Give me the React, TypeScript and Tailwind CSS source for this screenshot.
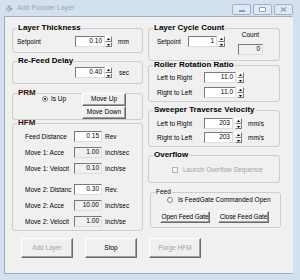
import React from 'react'

// Classic WinForms dialog, drawn small

function Spinner({ className = '' }: { className?: string }) {
    return (
        <div className={`flex h-[11px] w-[7px] shrink-0 flex-col ${className}`}>
            <div className="flex h-[6px] items-center justify-center border border-t-white border-l-white border-r-[#7a7a7a] border-b-[#7a7a7a] bg-[#f0f0f0]">
                <svg width="3" height="2" viewBox="0 0 3 2">
                    <path d="M1.5 0L3 2H0z" fill="#000" />
                </svg>
            </div>
            <div className="flex h-[5px] items-center justify-center border border-t-white border-l-white border-r-[#7a7a7a] border-b-[#7a7a7a] bg-[#f0f0f0]">
                <svg width="3" height="2" viewBox="0 0 3 2">
                    <path d="M0 0h3L1.5 2z" fill="#000" />
                </svg>
            </div>
        </div>
    )
}

function Field({ value, className = '', gray = false }: { value: string; className?: string; gray?: boolean }) {
    return (
        <div
            className={`flex h-[11px] shrink-0 items-center justify-end border border-t-[#7a7a7a] border-l-[#7a7a7a] border-r-[#dedede] border-b-[#dedede] pr-[2px] leading-none ${gray ? 'bg-[#f0f0f0]' : 'bg-white'} ${className}`}
        >
            {value}
        </div>
    )
}

function Btn({ children, className = '', disabled = false }: { children: React.ReactNode; className?: string; disabled?: boolean }) {
    return (
        <button
            type="button"
            className={`flex shrink-0 items-center justify-center whitespace-nowrap border border-t-white border-l-white border-r-[#696969] border-b-[#696969] bg-[#f0f0f0] leading-none shadow-[inset_-1px_-1px_0_#a0a0a0] ${disabled ? 'text-[#a3a3a3]' : 'text-black'} ${className}`}
        >
            {children}
        </button>
    )
}

function Radio({ checked = false }: { checked?: boolean }) {
    return (
        <span className="flex h-[6px] w-[6px] shrink-0 items-center justify-center rounded-full border border-[#7f7f7f] bg-white">
            {checked && <span className="h-[2px] w-[2px] rounded-full bg-black" />}
        </span>
    )
}

function Group({
    title,
    bold = true,
    titleColor = 'text-black',
    className = '',
    children,
}: {
    title: string
    bold?: boolean
    titleColor?: string
    className?: string
    children: React.ReactNode
}) {
    return (
        <fieldset className={`min-w-0 rounded-[3px] border border-[#cdcdcd] ${className}`}>
            <legend
                className={`ml-[4px] px-[1px] leading-[8px] ${bold ? `text-[8px] font-bold ${titleColor}` : 'text-[6.5px] text-black'}`}
            >
                {title}
            </legend>
            {children}
        </fieldset>
    )
}

function HfmRow({ label, value, unit, gray = false, className = '' }: { label: string; value: string; unit: string; gray?: boolean; className?: string }) {
    return (
        <div className={`flex h-[11px] items-center pl-[12px] ${className}`}>
            <span className="w-[49px] shrink-0 whitespace-nowrap">{label}</span>
            <Field value={value} gray={gray} className="w-[28px]" />
            <span className="ml-[3px] whitespace-nowrap">{unit}</span>
        </div>
    )
}

function SpinRow({ label, value, fieldW, unit, className = '' }: { label: string; value: string; fieldW: string; unit?: string; className?: string }) {
    return (
        <div className={`flex h-[11px] items-center pl-[8px] ${className}`}>
            <span className="w-[47px] shrink-0 whitespace-nowrap">{label}</span>
            <Field value={value} className={fieldW} />
            <Spinner className={unit ? 'ml-[2px]' : 'ml-[1px]'} />
            {unit && <span className="ml-[6px]">{unit}</span>}
        </div>
    )
}

export default function App() {
    return (
        <div className="flex h-[280px] w-[300px] flex-col bg-[#d3e0f0] pb-[6px] pl-[4px] pr-[7px] font-['Liberation_Sans',Arial,sans-serif] text-[6.5px] text-black">
            {/* title bar */}
            <div className="flex h-[16px] shrink-0 items-center">
                <svg width="8" height="8" viewBox="0 0 8 8" className="ml-[1px]">
                    <circle cx="4" cy="2.5" r="1.6" fill="#a7afb8" />
                    <circle cx="2.2" cy="5" r="1.6" fill="#b3bac2" />
                    <circle cx="5.8" cy="5" r="1.6" fill="#9ea7b1" />
                    <rect x="3.4" y="5.5" width="1.2" height="2.5" fill="#a7afb8" />
                </svg>
                <span className="ml-[4px] text-[7px] text-[#9ca6b1]">Add Powder Layer</span>
                <div className="ml-auto flex gap-[2px] self-end pb-[1px]">
                    <div className="flex h-[11px] w-[19px] items-center justify-center rounded-[2px] border border-[#9fb2c9] bg-[#dfe8f4]">
                        <span className="mt-[3px] h-[2px] w-[6px] border border-[#8d9db1] bg-white" />
                    </div>
                    <div className="flex h-[11px] w-[19px] items-center justify-center rounded-[2px] border border-[#9fb2c9] bg-[#dfe8f4]">
                        <span className="h-[5px] w-[7px] rounded-[1px] border border-[#8d9db1] bg-white" />
                    </div>
                    <div className="flex h-[11px] w-[19px] items-center justify-center rounded-[2px] border border-[#9fb2c9] bg-[#dfe8f4]">
                        <svg width="7" height="5" viewBox="0 0 7 5">
                            <path d="M1 0.5L6 4.5M6 0.5L1 4.5" stroke="#8d9db1" strokeWidth="1.2" />
                        </svg>
                    </div>
                </div>
            </div>

            {/* client area */}
            <div className="flex flex-1 flex-col border border-[#9cadc2] border-r-[#eaf1f9] bg-[#f0f0f0] pl-[7px] pt-[7px]">
                <div className="flex h-[207px] items-start gap-[5px]">
                    {/* left column */}
                    <div className="flex w-[131px] flex-col">
                        <Group title="Layer Thickness" className="h-[29px]">
                            <div className="mt-[4px] flex h-[11px] items-center pl-[4px]">
                                <span className="w-[58px] shrink-0">Setpoint</span>
                                <Field value="0.10" className="w-[30px]" />
                                <Spinner />
                                <span className="ml-[6px]">mm</span>
                            </div>
                        </Group>

                        <Group title="Re-Feed Delay" className="mt-[4px] h-[27px]">
                            <div className="mt-[2px] flex h-[11px] items-center pl-[62px]">
                                <Field value="0.40" className="w-[30px]" />
                                <Spinner />
                                <span className="ml-[7px]">sec</span>
                            </div>
                        </Group>

                        <Group title="PRM" titleColor="text-[#3a0a0a]" className="mt-[5px] h-[31px]">
                            <div className="flex items-start pl-[29px]">
                                <div className="-mt-[2px] flex h-[8px] w-[40px] items-center">
                                    <Radio checked />
                                    <span className="ml-[3px]">Is Up</span>
                                </div>
                                <div className="-mt-[4px] flex flex-col">
                                    <Btn className="h-[13px] w-[44px]">Move Up</Btn>
                                    <Btn className="h-[13px] w-[44px]">Move Down</Btn>
                                </div>
                            </div>
                        </Group>

                        <Group title="HFM" titleColor="text-[#3a0a0a]" className="-mt-[1px] h-[112px]">
                            <HfmRow label="Feed Distance" value="0.15" unit="Rev" className="mt-[4px]" />
                            <HfmRow label="Move 1: Acce" value="1.00" unit="Inch/sec" gray className="mt-[5px]" />
                            <HfmRow label="Move 1: Velocit" value="0.10" unit="Inch/se" gray className="mt-[5px]" />
                            <HfmRow label="Move 2: Distanc" value="0.30" unit="Rev." className="mt-[10px]" />
                            <HfmRow label="Move 2: Acce" value="10.00" unit="Inch/sec" gray className="mt-[5px]" />
                            <HfmRow label="Move 2: Velocit" value="1.00" unit="Inch/se" gray className="mt-[5px]" />
                        </Group>
                    </div>

                    {/* right column */}
                    <div className="flex w-[133px] flex-col">
                        <Group title="Layer Cycle Count" className="h-[37px] w-[132px]">
                            <div className="flex items-start">
                                <div className="mt-[4px] flex h-[11px] items-center pl-[8px]">
                                    <span className="w-[31px] shrink-0">Setpoint</span>
                                    <Field value="1" className="w-[29px]" />
                                    <Spinner className="ml-[1px]" />
                                </div>
                                <div className="ml-[13px] flex w-[25px] flex-col items-center">
                                    <span className="-mt-[1px] leading-[8px]">Count</span>
                                    <Field value="0" gray className="mt-[5px] w-[25px]" />
                                </div>
                            </div>
                        </Group>

                        <Group title="Roller Rotation Ratio" className="h-[41px] w-[132px]">
                            <SpinRow label="Left to Right" value="11.0" fieldW="w-[32px]" className="mt-[3px]" />
                            <SpinRow label="Right to Left" value="11.0" fieldW="w-[32px]" className="mt-[4px]" />
                        </Group>

                        <Group title="Sweeper Traverse Velocity" className="mt-[4px] h-[41px] w-[132px]">
                            <SpinRow label="Left to Right" value="203" fieldW="w-[29px]" unit="mm/s" className="mt-[4px]" />
                            <SpinRow label="Right to Left" value="203" fieldW="w-[29px]" unit="mm/s" className="mt-[3px]" />
                        </Group>

                        <Group title="Overflow" className="mt-[4px] h-[32px] w-[132px]">
                            <div className="mt-[7px] flex h-[8px] items-center pl-[23px]">
                                <span className="h-[6px] w-[6px] shrink-0 border border-[#b4b4b4] bg-[#f4f4f4]" />
                                <span className="ml-[5px] text-[#a3a3a3]">Launch Overflow Sequence</span>
                            </div>
                        </Group>

                        <Group title="Feed" bold={false} className="ml-[2px] mt-[5px] h-[40px] w-[131px]">
                            <div className="flex h-[8px] items-center pl-[16px]">
                                <Radio />
                                <span className="ml-[5px] whitespace-nowrap">Is FeedGate Commanded Open</span>
                            </div>
                            <div className="mt-[7px] flex gap-[8px] pl-[9px]">
                                <Btn className="h-[12px] w-[50px] tracking-[-0.1px]">Open Feed Gate</Btn>
                                <Btn className="h-[12px] w-[51px] tracking-[-0.1px]">Close Feed Gate</Btn>
                            </div>
                        </Group>
                    </div>
                </div>

                {/* bottom buttons */}
                <div className="mt-[7px] flex gap-[12px] pl-[9px]">
                    <Btn disabled className="h-[20px] w-[52px]">Add Layer</Btn>
                    <Btn className="h-[20px] w-[52px]">Stop</Btn>
                    <Btn disabled className="h-[20px] w-[52px]">Purge HFM</Btn>
                </div>
            </div>
        </div>
    )
}
